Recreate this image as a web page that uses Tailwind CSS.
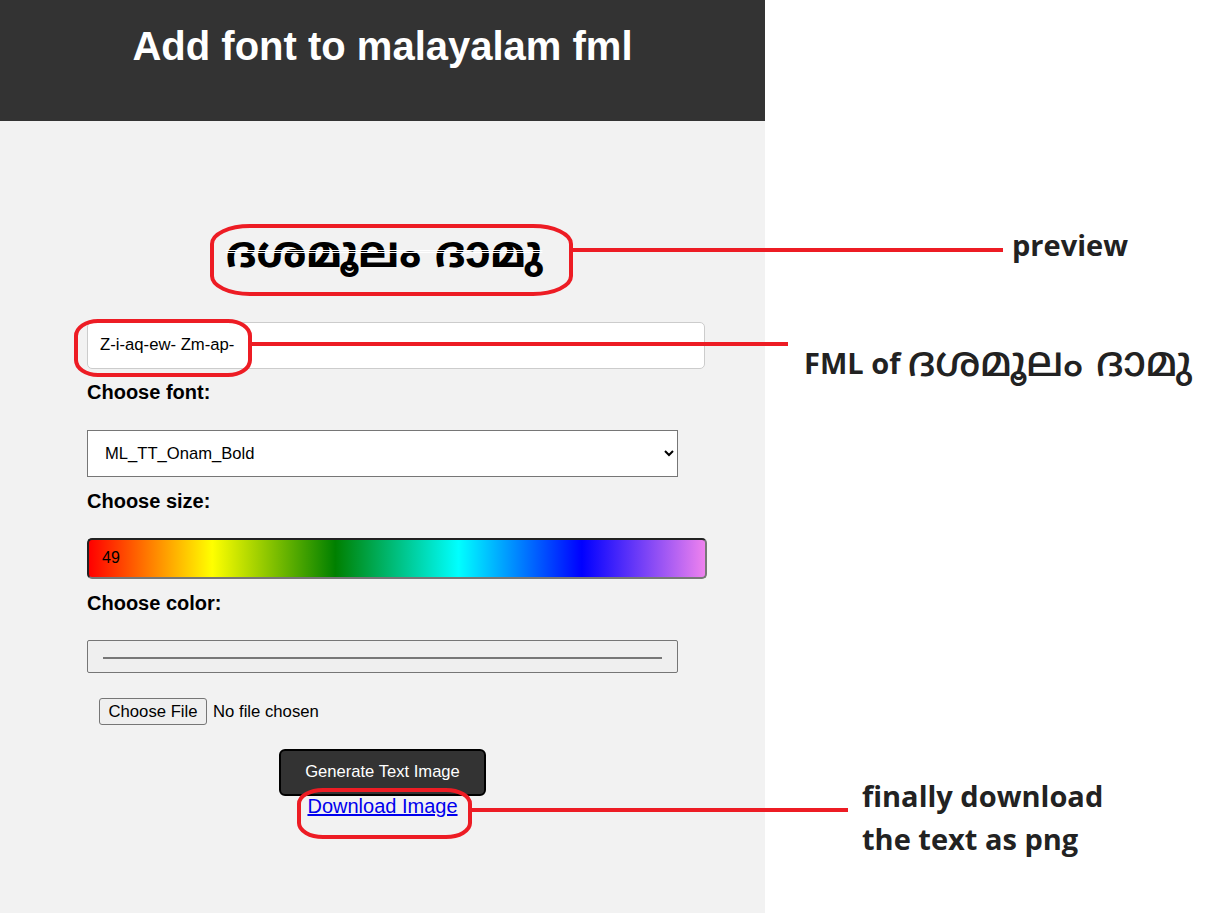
<!DOCTYPE html>
<html lang="en">
<head>
    <meta charset="UTF-8">
    <meta name="viewport" content="width=device-width, initial-scale=1.0">
    <title>Add font to malayalam fml</title>
    <script src="https://cdn.jsdelivr.net/npm/@tailwindcss/browser@4"></script>
</head>
<body class="bg-white font-['Liberation_Sans',Arial,sans-serif] text-black">
    <div class="relative w-[1231px] h-[913px] overflow-hidden">
        <div class="w-[765px] h-[913px] bg-[#f2f2f2]">
            <header class="h-[121px] bg-[#333333] text-white text-center pt-[23px]">
                <h1 class="text-[40px] leading-[46px] font-bold">Add font to malayalam fml</h1>
            </header>

            <main class="px-[87px]">
                <div class="mt-[103px] h-[67px] pl-[3px] text-center text-[37px] leading-[66px] font-bold whitespace-nowrap line-through decoration-double decoration-white decoration-[1px] font-['Noto_Sans_Malayalam','Noto_Sans',sans-serif]"><span class="text-[43.5px] leading-[66px]">ദശമൂലം ദാമു</span></div>

                <input type="text" value="Z-i-aq-ew- Zm-ap-" class="block mt-[31px] w-[618px] h-[47px] px-[12px] pb-[1px] bg-white border border-[#cccccc] rounded-[5px] text-[16.7px]">

                <label class="block mt-[13px] text-[20px] leading-[21px] font-bold">Choose font:</label>
                <select class="block mt-[27px] w-[591px] h-[47px] px-[13px] bg-white border border-[#767676] text-[16.6px]">
                    <option>ML_TT_Onam_Bold</option>
                </select>

                <label class="block mt-[14px] text-[20px] leading-[21px] font-bold">Choose size:</label>
                <input type="text" value="49" class="block mt-[26px] w-[620px] h-[41px] px-[13px] pb-[1px] border-2 border-t-[#222222] border-l-[#222222] border-r-[#777777] border-b-[#777777] rounded-[5px] text-[16px] bg-[linear-gradient(to_right,red,yellow,green,cyan,blue,violet)]">

                <label class="block mt-[14px] text-[20px] leading-[21px] font-bold">Choose color:</label>
                <input type="color" value="#000000" class="block mt-[26px] w-[591px] h-[33px] px-[13px] py-[15px] bg-[#efefef] border border-[#767676] rounded-[2px]">

                <input type="file" class="block mt-[25px] ml-[12px] text-[16.7px] leading-[25px] file:h-[27px] file:px-[8.5px] file:mr-[6px] file:bg-[#efefef] file:border file:border-[#767676] file:rounded-[3px]">

                <div class="flex flex-col items-center w-[591px]">
                    <button class="mt-[24px] w-[207px] h-[47px] bg-[#333333] text-white text-[16.6px] border-2 border-black rounded-[6px]">Generate Text Image</button>
                    <a href="#" class="text-[20px] leading-[21px] text-[#0000ee] underline">Download Image</a>
                </div>
            </main>
        </div>

        <!-- annotations drawn over the screenshot -->
        <svg class="absolute left-0 top-0" width="1231" height="913" fill="none" stroke="#ed1c24" stroke-width="4">
            <rect x="212" y="226" width="359" height="68" rx="38" ry="18"/>
            <rect x="76" y="321" width="174" height="54" rx="22" ry="15"/>
            <rect x="299" y="790" width="171" height="47" rx="24" ry="14"/>
            <path d="M571 250H1003M250 344H788M470 810H848"/>
        </svg>
        <div class="absolute left-[1012px] top-[227px] text-[29px] leading-[36px] font-bold text-[#222222] font-['Open_Sans',sans-serif]">preview</div>
        <div class="absolute left-[804px] top-[339px] h-[48px] flex items-center gap-[7px] text-[29px] leading-[48px] font-bold text-[#222222] whitespace-nowrap font-['Open_Sans',sans-serif]">FML of <span class="pt-[5px] text-[42px] font-medium font-['Noto_Sans_Malayalam',sans-serif]">ദശമൂലം ദാമു</span></div>
        <div class="absolute left-[862px] top-[774px] text-[29px] leading-[43px] font-bold text-[#222222] whitespace-nowrap font-['Open_Sans',sans-serif]">finally download<br>the text as png</div>
    </div>
</body>
</html>
